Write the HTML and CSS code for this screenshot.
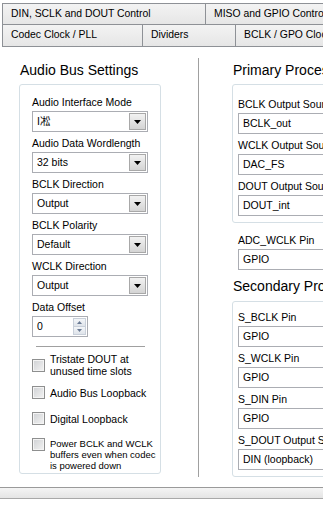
FILE: index.html
```html
<!DOCTYPE html>
<html lang="en">
<head>
    <meta charset="UTF-8">
    <title>Audio Bus Settings</title>
    <link rel="stylesheet" href="styles.css">
</head>
<body>
    <div class="tabs">
        <div class="tab-row">
            <div class="tab tab-din">DIN, SCLK and DOUT Control</div>
            <div class="tab tab-wide">MISO and GPIO Control</div>
        </div>
        <div class="tab-row">
            <div class="tab tab-codec">Codec Clock / PLL</div>
            <div class="tab tab-div">Dividers</div>
            <div class="tab tab-wide">BCLK / GPO Clock</div>
        </div>
    </div>

    <div class="page">
        <div class="col-left">
            <div class="group-title">Audio Bus Settings</div>
            <div class="group group-audio">
                <div class="field">
                    <div class="label">Audio Interface Mode</div>
                    <div class="combo"><span>I凇</span><div class="drop"><svg width="7" height="4" viewBox="0 0 7 4"><path d="M0 0h7L3.5 4z" fill="#000"/></svg></div></div>
                </div>
                <div class="field">
                    <div class="label">Audio Data Wordlength</div>
                    <div class="combo"><span>32 bits</span><div class="drop"><svg width="7" height="4" viewBox="0 0 7 4"><path d="M0 0h7L3.5 4z" fill="#000"/></svg></div></div>
                </div>
                <div class="field">
                    <div class="label">BCLK Direction</div>
                    <div class="combo"><span>Output</span><div class="drop"><svg width="7" height="4" viewBox="0 0 7 4"><path d="M0 0h7L3.5 4z" fill="#000"/></svg></div></div>
                </div>
                <div class="field">
                    <div class="label">BCLK Polarity</div>
                    <div class="combo"><span>Default</span><div class="drop"><svg width="7" height="4" viewBox="0 0 7 4"><path d="M0 0h7L3.5 4z" fill="#000"/></svg></div></div>
                </div>
                <div class="field">
                    <div class="label">WCLK Direction</div>
                    <div class="combo"><span>Output</span><div class="drop"><svg width="7" height="4" viewBox="0 0 7 4"><path d="M0 0h7L3.5 4z" fill="#000"/></svg></div></div>
                </div>
                <div class="field">
                    <div class="label">Data Offset</div>
                    <div class="spin">
                        <span>0</span>
                        <div class="spin-btns">
                            <div class="spin-btn"><svg width="5" height="3" viewBox="0 0 5 3"><path d="M0 3h5L2.5 0z" fill="#6a7a94"/></svg></div>
                            <div class="spin-btn"><svg width="5" height="3" viewBox="0 0 5 3"><path d="M0 0h5L2.5 3z" fill="#6a7a94"/></svg></div>
                        </div>
                    </div>
                </div>
                <div class="hsep"></div>
                <div class="check check-tristate">
                    <div class="box"></div>
                    <div class="check-text">Tristate DOUT at<br>unused time slots</div>
                </div>
                <div class="check">
                    <div class="box"></div>
                    <div class="check-text">Audio Bus Loopback</div>
                </div>
                <div class="check">
                    <div class="box"></div>
                    <div class="check-text">Digital Loopback</div>
                </div>
                <div class="check check-power">
                    <div class="box"></div>
                    <div class="check-text small">Power BCLK and WCLK<br>buffers even when codec<br>is powered down</div>
                </div>
            </div>
        </div>

        <div class="vsep"></div>

        <div class="col-right">
            <div class="group-title">Primary Processing Block</div>
            <div class="group group-primary">
                <div class="field">
                    <div class="label">BCLK Output Source</div>
                    <div class="combo"><span>BCLK_out</span></div>
                </div>
                <div class="field">
                    <div class="label">WCLK Output Source</div>
                    <div class="combo"><span>DAC_FS</span></div>
                </div>
                <div class="field">
                    <div class="label">DOUT Output Source</div>
                    <div class="combo"><span>DOUT_int</span></div>
                </div>
            </div>
            <div class="field field-adc">
                <div class="label">ADC_WCLK Pin</div>
                <div class="combo"><span>GPIO</span></div>
            </div>
            <div class="group-title title-secondary">Secondary Processing Block</div>
            <div class="group group-secondary">
                <div class="field">
                    <div class="label">S_BCLK Pin</div>
                    <div class="combo"><span>GPIO</span></div>
                </div>
                <div class="field">
                    <div class="label">S_WCLK Pin</div>
                    <div class="combo"><span>GPIO</span></div>
                </div>
                <div class="field">
                    <div class="label">S_DIN Pin</div>
                    <div class="combo"><span>GPIO</span></div>
                </div>
                <div class="field">
                    <div class="label">S_DOUT Output Source</div>
                    <div class="combo"><span>DIN (loopback)</span></div>
                </div>
            </div>
        </div>
    </div>

    <div class="statusbar"></div>
</body>
</html>
```

FILE: styles.css
```css
body {
    margin: 0;
    padding: 0;
    width: 323px;
    height: 508px;
    overflow: hidden;
    background: #fff;
    font-family: "Liberation Sans", "Noto Sans CJK SC", sans-serif;
    font-size: 10.5px;
    color: #000;
}

/* tab strip */
.tabs {
    padding: 3px 0 0 2px;
    background: #fff;
    overflow: hidden;
}

.tab-row {
    display: flex;
    white-space: nowrap;
}

.tab {
    box-sizing: border-box;
    flex: none;
    height: 21px;
    line-height: 20px;
    padding-left: 8px;
    font-size: 10.4px;
    border: 1px solid #8e9196;
    border-bottom: none;
    margin-right: -1px;
    background: linear-gradient(#f3f3f3, #e6e6e6);
    overflow: hidden;
}

.tab-row + .tab-row .tab {
    height: 23px;
    border-bottom: 1px solid #8e9196;
}

.tab-din {
    width: 204px;
}

.tab-codec {
    width: 141px;
}

.tab-div {
    width: 94px;
}

.tab-wide {
    width: 140px;
}

/* main area */
.page {
    display: flex;
    height: 440px;
}

.col-left {
    width: 198px;
    flex: none;
    padding: 15px 0 0 19px;
    box-sizing: border-box;
}

.col-right {
    flex: none;
    width: 160px;
    padding: 15px 0 0 33px;
    white-space: nowrap;
}

.vsep {
    flex: none;
    width: 1px;
    height: 419px;
    margin-top: 11px;
    background: #a0a0a0;
}

.group-title {
    font-size: 14px;
    line-height: 17px;
    height: 17px;
    margin-bottom: 5px;
    padding-left: 1px;
    white-space: nowrap;
}

.group {
    border: 1px solid #d5dfe5;
    border-radius: 3px;
}

.group-audio {
    width: 142px;
    height: 390px;
    padding: 10px 0 0 12px;
    box-sizing: border-box;
}

.group-primary {
    width: 150px;
    height: 139px;
    padding: 12px 0 0 5px;
    box-sizing: border-box;
}

.group-secondary {
    width: 150px;
    height: 176px;
    padding: 8px 0 0 5px;
    box-sizing: border-box;
}

.title-secondary {
    margin-top: 8px;
    margin-bottom: 6px;
}

.field {
    margin-bottom: 4px;
}

.field-adc {
    margin: 10px 0 0 6px;
}

.label {
    line-height: 14px;
    height: 14px;
    margin-bottom: 2px;
    white-space: nowrap;
}

.combo {
    box-sizing: border-box;
    position: relative;
    width: 116px;
    height: 21px;
    border: 1px solid #abadb3;
    background: #fff;
    padding-left: 4px;
    line-height: 19px;
    white-space: nowrap;
}

.col-right .combo {
    width: 140px;
}

.drop {
    position: absolute;
    top: 1px;
    right: 1px;
    width: 15px;
    height: 15px;
    border: 1px solid #a8a8a8;
    background: linear-gradient(#f2f2f2, #d4d4d4);
    display: flex;
    align-items: center;
    justify-content: center;
}

.spin {
    box-sizing: border-box;
    position: relative;
    width: 56px;
    height: 21px;
    border: 1px solid #abadb3;
    padding-left: 4px;
    line-height: 19px;
}

.spin-btns {
    position: absolute;
    top: 1px;
    right: 1px;
    width: 13px;
    height: 17px;
    display: flex;
    flex-direction: column;
}

.spin-btn {
    flex: 1;
    border: 1px solid #c9d0da;
    background: linear-gradient(#f4f6f9, #dfe4ea);
    display: flex;
    align-items: center;
    justify-content: center;
}

.spin-btn + .spin-btn {
    border-top: none;
}

.hsep {
    width: 109px;
    height: 1px;
    margin: 9px 0 0 4px;
    background: #a0a0a0;
}

/* checkboxes */
.check {
    display: flex;
    align-items: center;
    gap: 5px;
    margin-top: 13px;
}

.check-tristate {
    margin-top: 6px;
    margin-bottom: -4px;
}

.check-power {
    align-items: flex-start;
}

.box {
    flex: none;
    box-sizing: border-box;
    width: 13px;
    height: 13px;
    border: 1px solid #8e8f8f;
    background: linear-gradient(135deg, #cfd1d4, #f3f3f3);
    box-shadow: inset 0 0 0 1px #f4f4f4;
}

.check-text {
    line-height: 12px;
    white-space: nowrap;
}

.check-text.small {
    font-size: 9.5px;
    line-height: 11px;
}

/* bottom bar */
.statusbar {
    height: 10px;
    border-top: 1px solid #9a9a9a;
    border-bottom: 1px solid #a8a8a8;
    background: linear-gradient(#f4f4f4, #e4e4e4);
}
```
